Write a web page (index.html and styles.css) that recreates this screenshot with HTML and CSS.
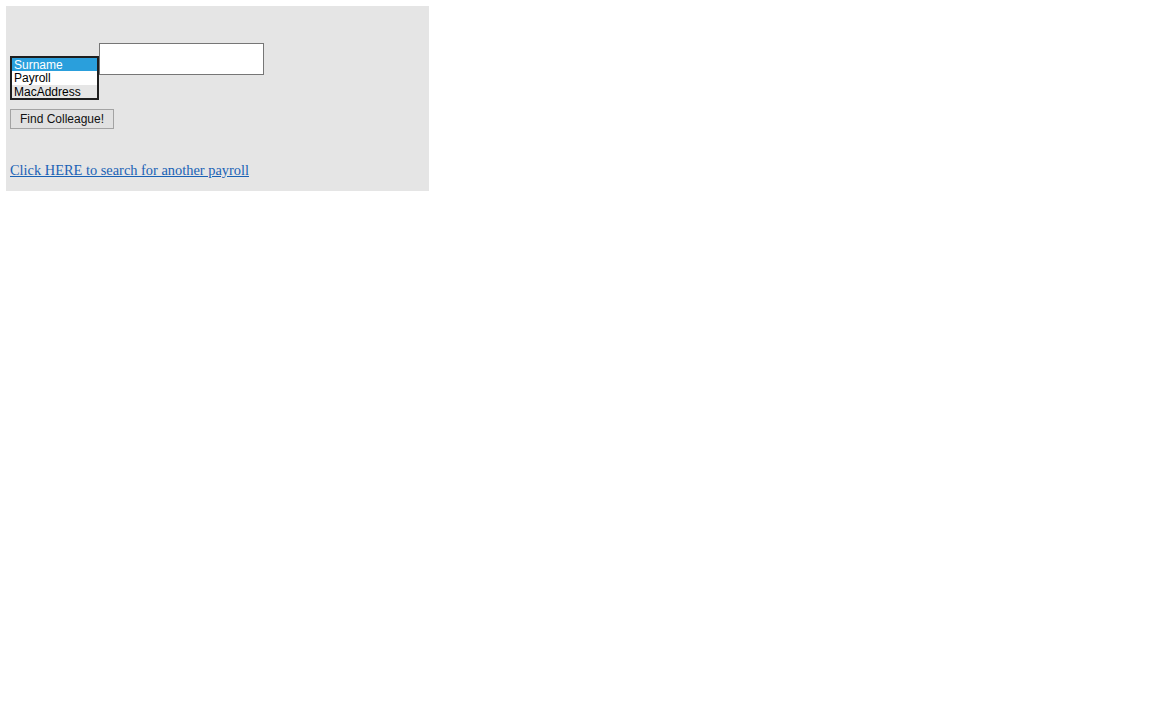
FILE: index.html
```html
<!DOCTYPE html>
<html>
<head>
<meta charset="utf-8">
<link rel="stylesheet" href="styles.css">
</head>
<body>
<div class="panel">
  <div class="row">
    <div class="listbox">
      <div class="opt sel">Surname</div>
      <div class="opt">Payroll</div>
      <div class="opt grey">MacAddress</div>
    </div>
    <input class="field" type="text">
  </div>
  <button class="btn" type="button">Find Colleague!</button>
  <a class="link" href="#">Click HERE to search for another payroll</a>
</div>
</body>
</html>
```
FILE: styles.css
```css
html, body { margin: 0; padding: 0; background: #fff; }
body { padding: 6px; }
.panel {
  width: 423px;
  height: 185px;
  box-sizing: border-box;
  background: #e5e5e5;
  padding: 37px 4px 0 4px;
  display: flex;
  flex-direction: column;
  align-items: flex-start;
}
.row { display: flex; align-items: flex-start; }
.listbox {
  margin-top: 13px;
  width: 89px;
  height: 44px;
  box-sizing: border-box;
  border: 2px solid #1e1e1e;
  background: #fff;
  font-family: "Liberation Sans", Arial, sans-serif;
  font-size: 12px;
  color: #000;
  display: flex;
  flex-direction: column;
}
.opt { height: 13.4px; box-sizing: border-box; padding: 1px 0 0 2px; line-height: 13px; white-space: nowrap; overflow: hidden; }
.opt.sel { background: #2a9fdc; color: #fff; }
.opt.grey { background: #e6e6e6; flex: 1; }
.field {
  width: 165px;
  height: 32px;
  box-sizing: border-box;
  border: 1px solid #767676;
  background: #fff;
  margin: 0;
  padding: 0;
  outline: none;
}
.btn {
  margin-top: 9px;
  width: 104px;
  height: 20px;
  box-sizing: border-box;
  border: 1px solid #a3a3a3;
  background: #e1e1e1;
  font-family: "Liberation Sans", Arial, sans-serif;
  font-size: 12px;
  color: #111;
  padding: 0;
  border-radius: 0;
  appearance: none;
}
.link {
  margin-top: 33px;
  font-family: "Liberation Serif", "Times New Roman", serif;
  font-size: 14.4px;
  color: #1a62b5;
  text-decoration: underline;
}
```
